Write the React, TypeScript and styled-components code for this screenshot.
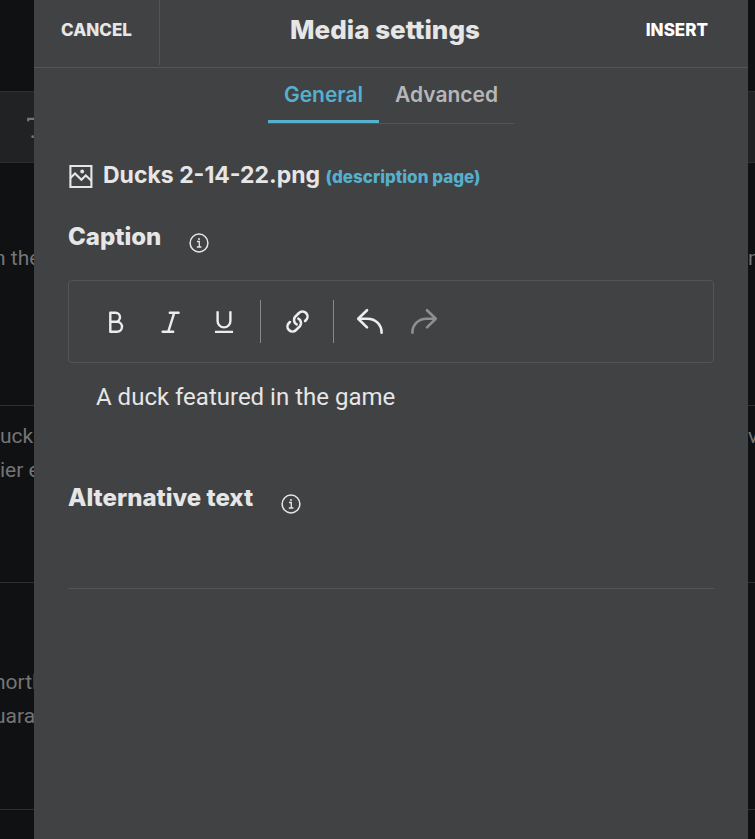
import React from 'react';
import styled, { createGlobalStyle, css } from 'styled-components';

const color = {
  page: '#101113',
  pageBar: '#212224',
  pageLine: '#2e2f31',
  pageText: '#747576',
  panel: '#414244',
  line: '#545557',
  text: '#e6e6e6',
  muted: '#b6b7b9',
  accent: '#56b0cd',
};

const GlobalStyle = createGlobalStyle`
  *, *::before, *::after { box-sizing: border-box; }
  body {
    margin: 0;
    background: ${color.page};
    color: ${color.text};
    font-family: Inter, Roboto, sans-serif;
  }
  h1, h2, p { margin: 0; }
  button, input, textarea { font: inherit; color: inherit; }
`;

const Screen = styled.div`
  position: relative;
  display: flex;
  min-height: 100vh;
  overflow: hidden;
`;

const Article = styled.div`
  flex: 1;
  display: flex;
  flex-direction: column;
  min-width: 0;
  color: ${color.pageText};
  font-family: Roboto, sans-serif;
  font-size: 21px;
  line-height: 34px;
`;

const ArticleTop = styled.div`
  height: 91px;
`;

const ArticleBar = styled.div`
  display: flex;
  height: 72px;
  padding: 25px 0 0 26px;
  background: ${color.pageBar};
  border-top: 1px solid ${color.pageLine};
  border-bottom: 1px solid ${color.pageLine};
`;

const Section = styled.section<{ $height: number; $top: number; $overhang: number }>`
  display: flex;
  justify-content: space-between;
  height: ${(p) => p.$height}px;
  padding-top: ${(p) => p.$top}px;
  border-bottom: 1px solid ${color.pageLine};

  & > :first-child {
    margin-left: -${(p) => p.$overhang}px;
  }
`;

const EdgeText = styled.p<{ $side: 'start' | 'end' }>`
  display: flex;
  flex-direction: column;
  width: ${(p) => (p.$side === 'start' ? 60 : 7)}px;
  white-space: nowrap;
`;

const Dialog = styled.div`
  position: absolute;
  inset: 0 7px 0 34px;
  display: flex;
  flex-direction: column;
  background: ${color.panel};
`;

const Header = styled.header`
  display: flex;
  height: 68px;
  border-bottom: 1px solid ${color.line};
`;

const HeaderButton = styled.button<{ $kind: 'cancel' | 'insert' }>`
  border: 0;
  background: none;
  cursor: pointer;
  font-size: 17px;
  font-weight: 800;
  line-height: 24px;
  text-transform: uppercase;
  ${(p) =>
    p.$kind === 'cancel'
      ? css`
          width: 126px;
          margin-bottom: 2px;
          padding: 0 0 6px;
          border-right: 1px solid ${color.line};
        `
      : css`
          width: 138px;
          padding: 0 40px 8px 0;
          color: #fff;
          text-align: right;
        `}
`;

const Title = styled.h1`
  flex: 1;
  padding-top: 14px;
  font-size: 26px;
  font-weight: 800;
  line-height: 32px;
  text-align: center;
`;

const Tabs = styled.div`
  display: flex;
  align-self: center;
  border-bottom: 1px solid ${color.line};
`;

const Tab = styled.button<{ $active?: boolean }>`
  height: 55px;
  padding: 2px 16px 0;
  border: 0;
  border-bottom: 3px solid ${(p) => (p.$active ? color.accent : 'transparent')};
  background: none;
  color: ${(p) => (p.$active ? color.accent : color.muted)};
  cursor: pointer;
  font-size: 21px;
  font-weight: 600;
  line-height: 50px;
`;

const Body = styled.main`
  display: flex;
  flex-direction: column;
  padding: 35px 34px;
`;

const FileRow = styled.div`
  display: flex;
  align-items: center;
  gap: 10px;
  margin-bottom: 28px;
`;

const FileName = styled.h2`
  font-size: 23px;
  font-weight: 700;
  line-height: 32px;
`;

const FileLink = styled.a`
  color: ${color.accent};
  font-size: 17px;
  font-weight: 800;
  text-decoration: none;
`;

const LabelRow = styled.div`
  display: flex;
  align-items: flex-end;
  gap: 28px;
`;

const Label = styled.label`
  font-size: 24px;
  font-weight: 800;
  line-height: 32px;
`;

const InfoButton = styled.button`
  display: flex;
  padding: 0;
  border: 0;
  background: none;
  cursor: pointer;
`;

const Toolbar = styled.div`
  display: flex;
  align-items: center;
  gap: 20px;
  height: 83px;
  margin-top: 27px;
  padding: 0 31px;
  border: 1px solid ${color.line};
  border-radius: 4px;
`;

const ToolGroup = styled.div`
  display: flex;
  gap: 22px;
`;

const ToolButton = styled.button`
  display: flex;
  align-items: center;
  justify-content: center;
  width: 32px;
  height: 32px;
  padding: 0;
  border: 0;
  background: none;
  color: #eceded;
  cursor: pointer;

  &:disabled {
    color: #8e8f91;
    cursor: default;
  }
`;

const Divider = styled.span`
  width: 1px;
  height: 43px;
  background: #88898b;
`;

const TextArea = styled.textarea<{ $kind: 'caption' | 'alt' }>`
  display: block;
  width: 100%;
  border: 0;
  outline: 0;
  background: none;
  resize: none;
  font-family: Roboto, sans-serif;
  font-size: 24px;
  line-height: 32px;
  ${(p) =>
    p.$kind === 'caption'
      ? css`
          height: 88px;
          margin-bottom: 31px;
          padding: 18px 28px;
        `
      : css`
          height: 75px;
          padding: 18px 0;
          border-bottom: 1px solid ${color.line};
        `}
`;

const Stroke = ({ children, size = 32, width = 2.4 }: { children: React.ReactNode; size?: number; width?: number }) => (
  <svg width={size} height={size} viewBox="0 0 32 32" fill="none" stroke="currentColor" strokeWidth={width} strokeLinecap="round" strokeLinejoin="round" aria-hidden="true">
    {children}
  </svg>
);

const InfoIcon = () => (
  <svg width="20" height="20" viewBox="0 0 20 20" fill="none" stroke="currentColor" strokeWidth="1.5" aria-hidden="true">
    <circle cx="10" cy="10" r="8.9" />
    <path d="M8 8.5h2.3v5.4M7.8 14h4.6" strokeWidth="1.3" />
    <circle cx="10" cy="6" r="1" fill="currentColor" stroke="none" />
  </svg>
);

const PictureIcon = () => (
  <svg width="25" height="25" viewBox="0 0 25 25" fill="none" stroke="currentColor" strokeWidth="2.1" aria-hidden="true">
    <path d="M2.4 2H23.4V23H2.4Z" />
    <path d="M2.4 14L7 9.4L13.4 15.8L17.8 11.4L23.4 16.8" />
    <circle cx="14.2" cy="7.5" r="1.9" fill="currentColor" stroke="none" />
  </svg>
);

const tools = {
  bold: (
    <Stroke>
      <path d="M10.3 6.8H15.6a4.4 4.5 0 0 1 0 9H10.3zM10.3 15.8H17a5 5 0 0 1 0 10H10.3z" />
    </Stroke>
  ),
  italic: (
    <Stroke>
      <path d="M15.8 6.8H24.6M8.6 25.8H19.2M20.2 6.8L14.2 25.8" />
    </Stroke>
  ),
  underline: (
    <Stroke>
      <path d="M9.6 6.5V15a6.4 6.4 0 0 0 12.8 0V6.5M8.2 25.9H23.8" strokeLinecap="square" />
    </Stroke>
  ),
  link: (
    <svg width="25" height="25" viewBox="0 0 24 24" fill="none" stroke="currentColor" strokeWidth="2.5" strokeLinecap="round" strokeLinejoin="round" aria-hidden="true">
      <path d="M12.8 9.2a4.8 4.8 0 0 1 1.6 7.2l-3.8 3.8a4.8 4.8 0 0 1-6.8-6.8l.9-.9" />
      <path d="M11.2 14.8a4.8 4.8 0 0 1-1.6-7.2l3.8-3.8a4.8 4.8 0 0 1 6.8 6.8l-.9.9" />
    </svg>
  ),
  undo: (
    <Stroke width={2.6}>
      <path d="M13 4.2L4.2 12.8L13 21.4M4.2 12.8H13.5C21.5 12.8 27.6 18.5 27.6 26.8" />
    </Stroke>
  ),
  redo: (
    <Stroke width={2.6}>
      <path d="M19 4.2L27.8 12.8L19 21.4M27.8 12.8H18.5C10.5 12.8 4.4 18.5 4.4 26.8" />
    </Stroke>
  ),
};

const Tool = ({ name, label, disabled }: { name: keyof typeof tools; label: string; disabled?: boolean }) => (
  <ToolButton type="button" aria-label={label} disabled={disabled}>
    {tools[name]}
  </ToolButton>
);

const FieldLabel = ({ htmlFor, children }: { htmlFor: string; children: string }) => (
  <LabelRow>
    <Label htmlFor={htmlFor}>{children}</Label>
    <InfoButton type="button" aria-label={`About ${children.toLowerCase()}`}>
      <InfoIcon />
    </InfoButton>
  </LabelRow>
);

const sections = [
  { height: 243, top: 78, overhang: 6, start: ['n the'], end: ['n'] },
  { height: 177, top: 13, overhang: 0, start: ['uck', 'ier e'], end: ['v'] },
  { height: 227, top: 82, overhang: 6, start: ['hortl', 'uara'], end: [] },
];

export default function App() {
  return (
    <>
      <GlobalStyle />
      <Screen>
        <Article aria-hidden="true">
          <ArticleTop />
          <ArticleBar>
            <svg width="24" height="24" viewBox="0 0 24 24" fill="none" stroke="currentColor" strokeWidth="2.2">
              <path d="M2.2 3.5V1.8H14" strokeLinecap="round" />
              <circle cx="6.7" cy="19.7" r="1.4" fill="currentColor" stroke="none" />
            </svg>
          </ArticleBar>
          {sections.map((s) => (
            <Section key={s.start[0]} $height={s.height} $top={s.top} $overhang={s.overhang}>
              <EdgeText $side="start">
                {s.start.map((t) => (
                  <span key={t}>{t}</span>
                ))}
              </EdgeText>
              <EdgeText $side="end">
                {s.end.map((t) => (
                  <span key={t}>{t}</span>
                ))}
              </EdgeText>
            </Section>
          ))}
        </Article>

        <Dialog role="dialog" aria-labelledby="dialog-title">
          <Header>
            <HeaderButton type="button" $kind="cancel">Cancel</HeaderButton>
            <Title id="dialog-title">Media settings</Title>
            <HeaderButton type="button" $kind="insert">Insert</HeaderButton>
          </Header>
          <Tabs role="tablist">
            <Tab type="button" role="tab" aria-selected="true" $active>General</Tab>
            <Tab type="button" role="tab" aria-selected="false">Advanced</Tab>
          </Tabs>
          <Body>
            <FileRow>
              <PictureIcon />
              <FileName>
                Ducks 2-14-22.png <FileLink href="#description">(description page)</FileLink>
              </FileName>
            </FileRow>

            <FieldLabel htmlFor="caption">Caption</FieldLabel>
            <Toolbar role="toolbar" aria-label="Caption formatting">
              <ToolGroup>
                <Tool name="bold" label="Bold" />
                <Tool name="italic" label="Italic" />
                <Tool name="underline" label="Underline" />
              </ToolGroup>
              <Divider />
              <Tool name="link" label="Link" />
              <Divider />
              <ToolGroup>
                <Tool name="undo" label="Undo" />
                <Tool name="redo" label="Redo" disabled />
              </ToolGroup>
            </Toolbar>
            <TextArea id="caption" $kind="caption" defaultValue="A duck featured in the game" />

            <FieldLabel htmlFor="alt">Alternative text</FieldLabel>
            <TextArea id="alt" $kind="alt" />
          </Body>
        </Dialog>
      </Screen>
    </>
  );
}
